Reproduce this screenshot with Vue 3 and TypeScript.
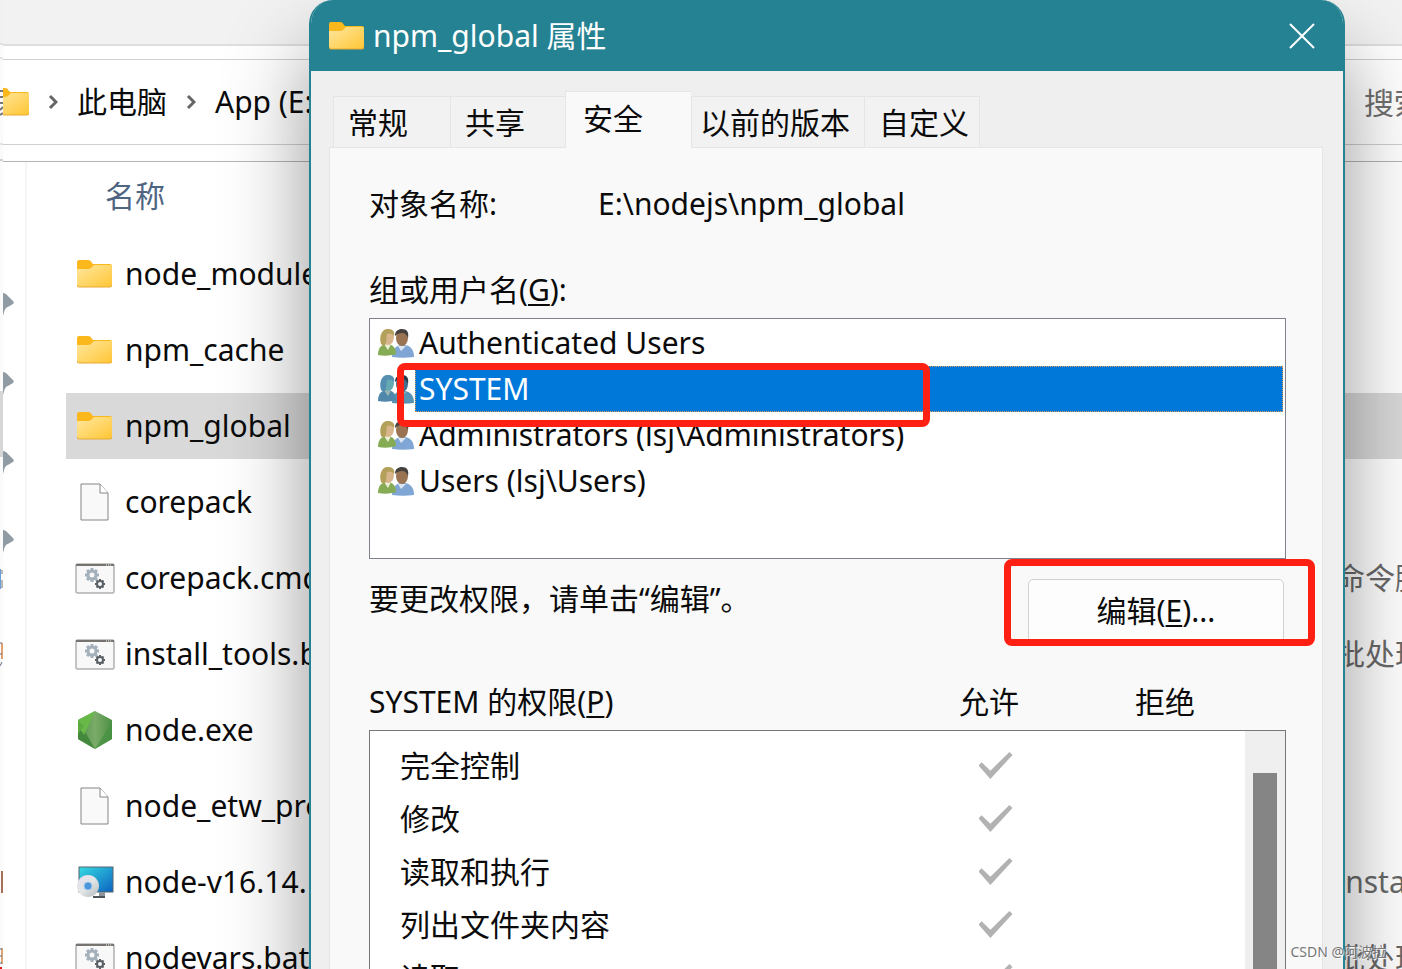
<script setup lang="ts">
import { ref } from 'vue'

type Kind = 'folder' | 'file' | 'script' | 'node' | 'msi'
interface Entry { name: string; kind: Kind; type?: string }

const files: Entry[] = [
  { name: 'node_modules', kind: 'folder' },
  { name: 'npm_cache', kind: 'folder' },
  { name: 'npm_global', kind: 'folder' },
  { name: 'corepack', kind: 'file' },
  { name: 'corepack.cmd', kind: 'script', type: '命令脚本' },
  { name: 'install_tools.bat', kind: 'script', type: '批处理' },
  { name: 'node.exe', kind: 'node' },
  { name: 'node_etw_pro', kind: 'file' },
  { name: 'node-v16.14.', kind: 'msi', type: 'Install' },
  { name: 'nodevars.bat', kind: 'script', type: '批处理' },
]
const selectedFile = ref('npm_global')

const tabs = ['常规', '共享', '安全', '以前的版本', '自定义']
const activeTab = ref('安全')

const principals = ['Authenticated Users', 'SYSTEM', 'Administrators (lsj\\Administrators)', 'Users (lsj\\Users)']
const activePrincipal = ref('SYSTEM')

const permissions = ['完全控制', '修改', '读取和执行', '列出文件夹内容', '读取']
const gearTeeth = [0, 45, 90, 135]
</script>

<template>
  <div class="desktop">
    <svg class="defs" aria-hidden="true">
      <defs>
        <linearGradient id="folderFace" x1="0" y1="0" x2="1" y2="1">
          <stop offset="0" stop-color="#ffe7a0" />
          <stop offset="1" stop-color="#ffc634" />
        </linearGradient>
        <linearGradient id="screenFace" x1="0" y1="0" x2="1" y2="1">
          <stop offset="0" stop-color="#35dbe2" />
          <stop offset="1" stop-color="#0c62c0" />
        </linearGradient>
        <linearGradient id="discFace" x1="0" y1="0" x2="1" y2="1">
          <stop offset="0" stop-color="#e9dff0" />
          <stop offset="0.5" stop-color="#e2e5e6" />
          <stop offset="1" stop-color="#b4b9bb" />
        </linearGradient>
        <linearGradient id="nodeFace" x1="0" y1="0" x2="1" y2="0">
          <stop offset="0" stop-color="#4f9347" />
          <stop offset="0.5" stop-color="#7bab69" />
          <stop offset="1" stop-color="#4c9144" />
        </linearGradient>
        <symbol id="folder" viewBox="0 0 35 28">
          <path d="M0 2a2 2 0 0 1 2-2h9c2 0 3 1 4 3l1 1h17a2 2 0 0 1 2 2v5H0z" fill="#fbb81c" />
          <path d="M0 9h11c2 0 3-1 4-2l2-2h17a1 1 0 0 1 1 1v19a2 2 0 0 1-2 2H2a2 2 0 0 1-2-2z" fill="url(#folderFace)" />
          <path d="M0 25a2 2 0 0 0 2 2h31a2 2 0 0 0 2-2" fill="none" stroke="#e9a92e" />
        </symbol>
        <symbol id="people" viewBox="0 0 36 30">
          <path d="M14 29c0-7 3-11 9-12h4c6 1 9 5 9 12-7 1-15 1-22 0z" fill="#7fa6d4" />
          <path d="M20 18l3 5 5-5z" fill="#dce6f2" />
          <ellipse cx="24" cy="10" rx="6" ry="8" fill="#9a7353" />
          <path d="M17 8c0-5 3-7 7-7 5 0 7 3 6 9-1-3-3-5-6-5s-5 1-7 3z" fill="#45413e" />
          <path d="M0 27c0-7 3-10 8-11h3c4 1 7 4 7 10-6 2-12 2-18 1z" fill="#85ac54" />
          <path d="M6 16l4 6 3-6z" fill="#eef0d9" />
          <ellipse cx="10" cy="9" rx="6" ry="8" fill="#d8b58d" />
          <path d="M3 16c-2-7 0-15 7-15 5 0 7 3 6 7-2-3-5-3-7-2-1 4 0 8-2 11-1 1-3 0-4-1z" fill="#b3a15b" />
        </symbol>
      </defs>
    </svg>

    <main class="explorer">
      <div class="commandbar"></div>
      <div class="addressrow">
        <nav class="address" aria-label="路径">
          <svg class="icon-folder"><use href="#folder" /></svg>
          <svg class="chevron" viewBox="0 0 10 16"><path d="M2 2l6 6-6 6" /></svg>
          <a href="#pc">此电脑</a>
          <svg class="chevron" viewBox="0 0 10 16"><path d="M2 2l6 6-6 6" /></svg>
          <a href="#app">App (E:)</a>
        </nav>
        <input class="search" type="text" placeholder="搜索" aria-label="搜索" />
      </div>
      <div class="content">
        <aside class="pins">
          <svg v-for="n in 4" :key="n" viewBox="0 0 12 24"><path d="M0 1c2 0 3 1 4 2l6 6c1 1 1 2 0 3-3 2-6 3-7 4-2 2-2 5-3 8z" /></svg>
        </aside>
        <table class="files">
          <thead>
            <tr><th scope="col">名称</th><td class="type"></td></tr>
          </thead>
          <tbody>
            <tr v-for="f in files" :key="f.name" :class="{ chosen: f.name === selectedFile }" @click="selectedFile = f.name">
              <td>
                <div class="entry">
                  <span class="glyph">
                    <svg v-if="f.kind === 'folder'" class="icon-folder"><use href="#folder" /></svg>
                    <svg v-else-if="f.kind === 'file'" class="icon-file" viewBox="0 0 29 38">
                      <path d="M1 1h19l8 9v27H1z" fill="#f9f9f9" stroke="#858585" />
                      <path d="M20 1v9h8" fill="#fff" stroke="#858585" />
                    </svg>
                    <svg v-else-if="f.kind === 'script'" class="icon-script" viewBox="0 0 40 31">
                      <rect x="1" y="1" width="38" height="29" rx="1" fill="#f8f8f8" stroke="#8b8b8b" />
                      <path d="M1 2h38" stroke="#77736e" stroke-width="2" />
                      <path d="M31 2h6" stroke="#eee" stroke-dasharray="1 1" />
                      <g transform="translate(17 12)" stroke="#a4b0bb" fill="none">
                        <circle r="4" stroke-width="3" />
                        <path v-for="a in gearTeeth" :key="a" d="M0-7v3M0 4v3" stroke-width="3" :transform="`rotate(${a})`" />
                      </g>
                      <g transform="translate(25 21)" stroke="#596167" fill="none">
                        <circle r="3" stroke-width="2" />
                        <path v-for="a in gearTeeth" :key="a" d="M0-5v2M0 3v2" stroke-width="2" :transform="`rotate(${a})`" />
                      </g>
                    </svg>
                    <svg v-else-if="f.kind === 'node'" class="icon-node" viewBox="0 0 34 38">
                      <path d="M17 0l17 9v19l-17 10L0 28V9z" fill="url(#nodeFace)" />
                      <path d="M0 9l17 29L0 28z" fill="#43883c" />
                      <path d="M17 0L0 9v6l6 9 11-24z" fill="#68b948" />
                      <path d="M0 9v14l6-8z" fill="#5bab40" />
                      <path d="M34 11L17 38l17-10z" fill="#469042" opacity="0.7" />
                    </svg>
                    <svg v-else class="icon-msi" viewBox="0 0 38 33">
                      <rect x="3" y="1" width="34" height="25" fill="url(#screenFace)" stroke="#58646d" />
                      <path d="M23 26h6v4h-6z" fill="#8d9498" />
                      <path d="M17 31h12" stroke="#4e565b" stroke-width="2" />
                      <circle cx="12" cy="20" r="11" fill="url(#discFace)" />
                      <circle cx="12" cy="20" r="4" fill="#4b95dc" stroke="#a9c9e8" />
                    </svg>
                  </span>
                  <span>{{ f.name }}</span>
                </div>
              </td>
              <td class="type">{{ f.type }}</td>
            </tr>
          </tbody>
        </table>
      </div>
    </main>

    <svg class="edge" viewBox="0 0 3 969" aria-hidden="true">
      <path d="M0 0h3v969H0z" fill="#fafafa" />
      <path d="M0 0h3v44H0z" fill="#f1f1f1" />
      <path d="M0 391h3v66H0z" fill="#d6d6d6" />
      <path d="M0 44h3M0 58h3M0 144h3" stroke="#ccc" />
      <path d="M0 160h3" stroke="#aaa" />
      <path d="M0 91h3M0 97h3M0 103h3M0 110l3-3M0 115l3-2" stroke="#777" stroke-width="2" />
      <path d="M0 569v20" stroke="#6a9fd8" stroke-width="2" />
      <path d="M2 570v4M2 580v8" stroke="#777" />
      <path d="M2 643v16" stroke="#e0a070" stroke-width="2" />
      <path d="M0 643h2M0 654h2M0 666l2-4" stroke="#5c6f86" />
      <path d="M2 871v22" stroke="#a66f59" stroke-width="2" />
      <path d="M2 948v16" stroke="#d9a577" stroke-width="2" />
      <path d="M0 949h2M0 956h2M0 963h2" stroke="#60708c" />
      <path d="M0 967h2v2H0z" fill="#e01818" />
    </svg>

    <section class="dialog" role="dialog" aria-labelledby="dialogTitle">
      <header class="titlebar">
        <svg class="icon-folder"><use href="#folder" /></svg>
        <h1 id="dialogTitle">npm_global 属性</h1>
        <button class="close" aria-label="关闭">
          <svg viewBox="0 0 26 26"><path d="M1 1l24 24M25 1L1 25" /></svg>
        </button>
      </header>

      <div class="tabs" role="tablist">
        <button
          v-for="t in tabs" :key="t" role="tab" class="tab"
          :class="{ active: t === activeTab, wide: t.length > 4 }"
          :aria-selected="t === activeTab" @click="activeTab = t"
        >{{ t }}</button>
      </div>

      <div class="panel" role="tabpanel">
        <div class="object">
          <span>对象名称:</span>
          <span>E:\nodejs\npm_global</span>
        </div>

        <div id="groupLabel" class="grouplabel">组或用户名(<u>G</u>):</div>
        <div class="principals">
          <ul role="listbox" aria-labelledby="groupLabel">
            <li
              v-for="p in principals" :key="p" role="option" tabindex="0"
              :aria-selected="p === activePrincipal" :class="{ picked: p === activePrincipal }"
              @click="activePrincipal = p"
            >
              <span class="avatar"><svg><use href="#people" /></svg></span>
              <span class="pname">{{ p }}</span>
            </li>
          </ul>
          <div class="mark mark-row"></div>
        </div>

        <div class="editrow">
          <p>要更改权限，请单击“编辑”。</p>
          <div class="editwrap">
            <button class="edit">编辑(<u>E</u>)...</button>
            <div class="mark mark-edit"></div>
          </div>
        </div>

        <div class="permhead">
          <span>SYSTEM 的权限(<u>P</u>)</span>
          <span class="col" id="allowCol">允许</span>
          <span class="col" id="denyCol">拒绝</span>
        </div>
        <div class="permbox">
          <table class="perms">
            <tbody>
              <tr v-for="p in permissions" :key="p">
                <th scope="row">{{ p }}</th>
                <td><input type="checkbox" checked disabled :aria-label="p" aria-describedby="allowCol" /></td>
                <td></td>
              </tr>
            </tbody>
          </table>
          <div class="scrollbar"><div class="thumb"></div></div>
        </div>
      </div>
    </section>

    <div class="watermark">CSDN @阿波拉</div>
  </div>
</template>

<style>
body { margin: 0; overflow: hidden; }
</style>

<style scoped>
* { box-sizing: border-box; }
.desktop {
  position: relative;
  height: 100vh;
  overflow: hidden;
  background: #fff;
  color: #0b0b0b;
  font-family: "Noto Sans", "Noto Sans CJK SC", sans-serif;
  font-size: 30px;
  line-height: 40px;
}
.defs { position: absolute; width: 0; height: 0; }
button, input { font: inherit; color: inherit; }
.icon-folder { display: block; flex: none; width: 35px; height: 28px; }

.explorer { display: flex; flex-direction: column; height: 100%; }
.commandbar { flex: none; height: 46px; background: #f2f2f2; border-bottom: 2px solid #dedede; }
.addressrow {
  flex: none;
  display: flex;
  justify-content: space-between;
  padding: 13px 0 16px;
  border-bottom: 1px solid #b4b4b4;
}
.address {
  flex: 1;
  display: flex;
  align-items: center;
  gap: 19px;
  height: 86px;
  margin-left: -6px;
  border: solid #cfcfcf;
  border-width: 1px 0;
}
.address a { color: inherit; text-decoration: none; white-space: nowrap; }
.chevron { flex: none; width: 10px; height: 16px; fill: none; stroke: #666; stroke-width: 3; }
.search {
  width: 38px;
  height: 86px;
  padding: 0;
  border: solid #cfcfcf;
  border-width: 1px 0;
  border-radius: 0;
  background: #fff;
  outline: none;
}
.search::placeholder { color: #6f6f6f; opacity: 1; }
.content { flex: 1; display: flex; min-height: 0; overflow: hidden; }
.pins {
  flex: none;
  display: flex;
  flex-direction: column;
  gap: 55px;
  width: 27px;
  padding: 130px 0 0 3px;
  border-right: 2px solid #f6f6f6;
}
.pins svg { flex: none; width: 12px; height: 24px; fill: #909ba3; }
.files {
  flex: none;
  align-self: flex-start;
  width: calc(100% - 66px);
  margin-left: 39px;
  border-collapse: separate;
  border-spacing: 0 10px;
  table-layout: fixed;
}
.files th, .files td { height: 66px; padding: 0; font-weight: 400; text-align: left; }
.files thead th { height: 59px; padding: 0 0 12px 39px; color: #4f6582; }
.files thead td { height: 59px; }
.files .type { width: 67px; color: #696969; white-space: nowrap; overflow: hidden; }
.chosen td { background: #d9d9d9; }
.entry { display: flex; align-items: center; gap: 2px; white-space: nowrap; }
.glyph { display: flex; justify-content: center; width: 57px; }
.icon-file { width: 29px; height: 38px; }
.icon-script { width: 40px; height: 31px; }
.icon-node { width: 34px; height: 38px; }
.icon-msi { width: 38px; height: 33px; }
.edge { position: absolute; left: 0; top: 0; width: 3px; height: 969px; }

.dialog {
  position: absolute;
  top: 0;
  bottom: -120px;
  left: 309px;
  right: 57px;
  display: flex;
  flex-direction: column;
  overflow: hidden;
  border: solid #258292;
  border-width: 0 2px;
  border-radius: 24px 24px 0 0;
  background: #efefef;
  box-shadow: 0 50px 84px rgba(0, 0, 0, 0.42);
}
.titlebar {
  flex: none;
  display: flex;
  align-items: center;
  height: 71px;
  padding: 0 28px 0 18px;
  background: #258292;
  color: #fff;
}
.titlebar h1 { flex: 1; margin: 0 0 0 9px; font-size: 30px; font-weight: 400; }
.close { display: flex; padding: 0; border: 0; background: none; }
.close svg { width: 26px; height: 26px; fill: none; stroke: #fff; stroke-width: 2; }

.tabs {
  flex: none;
  display: grid;
  grid-template-columns: 117px 115px 126px 173px 116px;
  align-items: end;
  height: 77px;
  padding-left: 22px;
}
.tab {
  height: 52px;
  padding: 2px 0 0 14px;
  border: 1px solid #e5e5e5;
  border-right-width: 0;
  background: #f2f2f2;
  text-align: left;
  white-space: nowrap;
}
.tab:last-child { border-right-width: 1px; }
.tab.wide { padding-left: 8px; }
.tab.active { z-index: 1; height: 57px; padding: 0 0 2px 17px; border-bottom: 0; background: #f9f9f9; }
.panel {
  flex: 1;
  display: flex;
  flex-direction: column;
  margin: -1px 20px 0 18px;
  padding: 36px 36px 0 39px;
  border: 1px solid #e5e5e5;
  background: #f9f9f9;
}
.object { display: flex; }
.object span:first-child { width: 229px; }
.grouplabel { margin-top: 46px; }
u { text-decoration-thickness: 2px; text-underline-offset: 3px; }

.principals { position: relative; margin-top: 8px; }
.principals ul {
  height: 241px;
  margin: 0;
  padding: 1px 2px 0 8px;
  border: 1px solid #7d828e;
  background: #fff;
  list-style: none;
}
.principals li { display: flex; align-items: center; height: 46px; }
.avatar { flex: none; width: 37px; height: 30px; }
.avatar svg { display: block; width: 36px; height: 30px; }
.pname { flex: 1; height: 46px; padding-left: 4px; line-height: 46px; white-space: nowrap; }
.picked .pname { background: #0078d9; color: #fff; outline: 1px dotted #e09a58; outline-offset: -1px; }
.picked .avatar { filter: sepia(1) hue-rotate(160deg) saturate(2) brightness(0.7); }
.mark { position: absolute; border: 7px solid #ff2014; border-radius: 8px; pointer-events: none; }
.mark-row { left: 28px; top: 45px; width: 533px; height: 64px; }

.editrow { display: flex; justify-content: space-between; align-items: flex-start; margin-top: 20px; }
.editrow p { margin: 0; white-space: nowrap; }
.editwrap { position: relative; margin-right: 2px; }
.edit {
  width: 256px;
  height: 64px;
  padding: 0;
  border: 1px solid #d2d2d2;
  border-radius: 5px;
  background: #fdfdfd;
}
.mark-edit { inset: -20px -31px -3px -24px; }

.permhead {
  display: grid;
  grid-template-columns: 1fr 176px 176px;
  margin-top: 39px;
  padding-right: 33px;
}
.col { text-align: center; }
.permbox { flex: 1; display: flex; min-height: 0; margin-top: 8px; border: 1px solid #777; background: #fff; overflow: hidden; }
.perms { flex: 1; align-self: flex-start; margin-top: 8px; border-collapse: collapse; table-layout: fixed; }
.perms th { height: 53px; padding: 0 0 0 30px; font-weight: 400; text-align: left; }
.perms td { width: 175px; padding: 0; text-align: center; }
.perms td:last-child { width: 162px; }
.perms input {
  appearance: none;
  display: block;
  width: 34px;
  height: 27px;
  margin: 0 auto;
  background: #b2b2b2;
  clip-path: polygon(0 50%, 9% 38%, 35% 69%, 91% 0, 100% 11%, 35% 100%);
}
.scrollbar { width: 40px; padding: 42px 8px 0; background: #efefef; }
.thumb { height: 100%; background: #858585; }
.watermark {
  position: absolute;
  right: 16px;
  bottom: 7px;
  font-size: 14px;
  line-height: 20px;
  color: #777;
  text-shadow: 1px 1px 1px #fff;
}
</style>
